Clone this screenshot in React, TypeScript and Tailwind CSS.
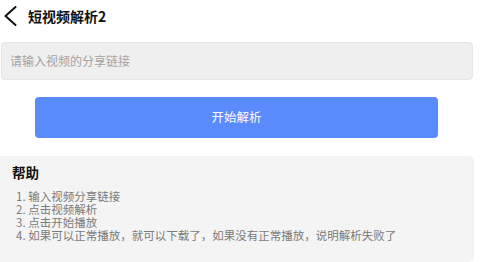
import React from "react";

export default function App() {
  const font = { fontFamily: '"Noto Sans CJK SC", Roboto, sans-serif' };
  return (
    <div className="w-[480px] h-[262px] bg-white overflow-hidden" style={font}>
      <div className="h-[32px] flex items-center">
        <svg width="22" height="22" viewBox="0 0 22 22">
          <path d="M15.5 2 L5.5 11 L15.5 20" fill="none" stroke="#111" strokeWidth="2" strokeLinecap="round" strokeLinejoin="round" />
        </svg>
        <span className="ml-[6px] text-[14px] font-bold text-[#111] leading-none">短视频解析2</span>
      </div>
      <div className="mt-[10px] ml-[1px] w-[472px] h-[38px] rounded-[4px] bg-[#efefef] border border-[#e6e6e6] flex items-center pl-[8px] text-[12px] text-[#a3a3a3]">
        请输入视频的分享链接
      </div>
      <div className="mt-[17px] ml-[35px] w-[403px] h-[41px] rounded-[4px] bg-[#5a8bfd] flex items-center justify-center text-white text-[12.5px]">
        开始解析
      </div>
      <div className="mt-[18px] w-[474px] h-[106px] rounded-r-[5px] bg-[#f4f4f4] pl-[12px] pt-[7px]">
        <div className="text-[13.5px] font-bold text-[#111] leading-[18px]">帮助</div>
        <div className="mt-[9px] pl-[4px] text-[11.5px] text-[#7a7a7a] leading-[13px]">
          <div>1. 输入视频分享链接</div>
          <div>2. 点击视频解析</div>
          <div>3. 点击开始播放</div>
          <div>4. 如果可以正常播放，就可以下载了，如果没有正常播放，说明解析失败了</div>
        </div>
      </div>
    </div>
  );
}
